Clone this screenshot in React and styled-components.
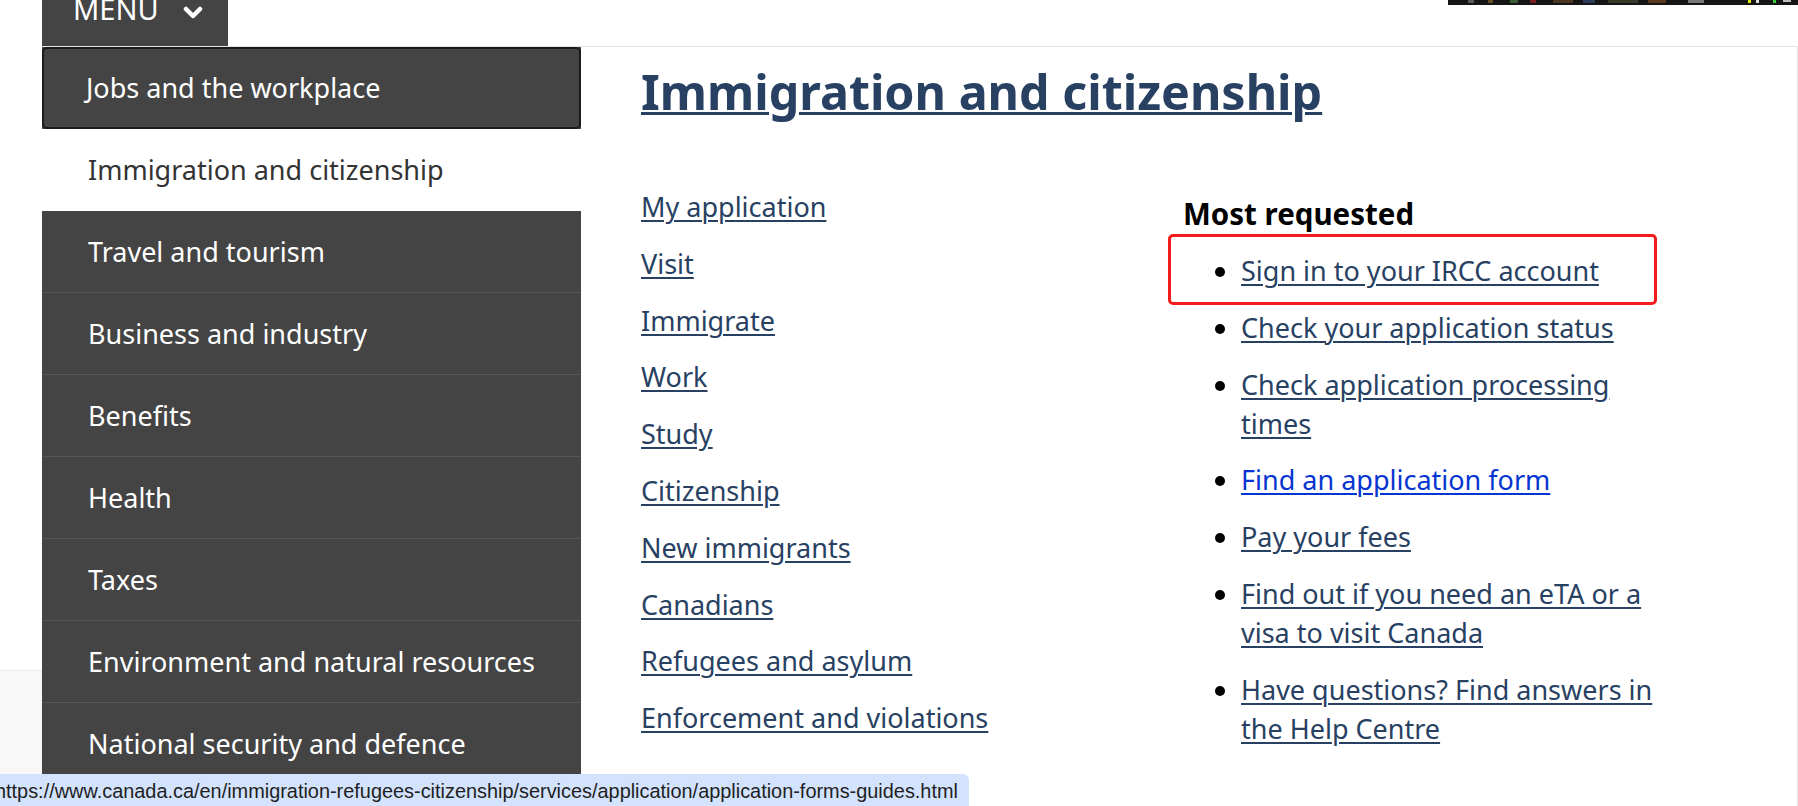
import React from 'react';
import styled, { createGlobalStyle, css } from 'styled-components';

const GlobalStyle = createGlobalStyle`
  html, body {
    margin: 0;
    padding: 0;
    height: 806px;
    overflow: hidden;
    background: #fff;
  }
  body {
    font-family: "Noto Sans", "DejaVu Sans", sans-serif;
  }
`;

const Page = styled.div`
  display: flex;
  flex-direction: column;
  height: 806px;
`;

const Header = styled.header`
  display: flex;
  align-items: flex-start;
  height: 46px;
  padding-left: 42px;
`;

const MenuButton = styled.button`
  display: flex;
  align-items: flex-start;
  width: 186px;
  height: 46px;
  padding: 0 0 0 31px;
  border: 0;
  background: #444;
  color: #fff;
  font-family: "Noto Sans", sans-serif;
  font-size: 29px;
  line-height: 29px;
  overflow: hidden;
  cursor: pointer;
`;

const MenuLabel = styled.span`
  margin-top: -6px;
`;

const Chevron = styled.svg`
  margin: 6px 0 0 24px;
`;

const Thumb = styled.svg`
  margin-left: auto;
  display: block;
`;

const Body = styled.div`
  display: flex;
  flex: 1;
  min-height: 0;
`;

const Gutter = styled.div`
  width: 42px;
  flex-shrink: 0;
  background: linear-gradient(#fff 0 624px, #ececec 624px 625px, #f8f8f8 625px);
`;

const Panel = styled.div`
  flex: 1;
  display: flex;
  border-top: 1px solid #e4e4e4;
  border-right: 1px solid #e4e4e4;
  background: #fff;
  min-height: 0;
`;

const MenuList = styled.ul`
  list-style: none;
  margin: 0;
  padding: 0;
  width: 539px;
  flex-shrink: 0;
  background: #444;
  overflow: hidden;
`;

const MenuItem = styled.li`
  box-sizing: border-box;
  height: 82px;
  display: flex;
  align-items: center;
  padding-left: 46px;
  font-size: 27px;
  color: ${p => (p.$current ? '#333' : '#fff')};
  background: ${p => (p.$current ? '#fff' : '#444')};
  border-bottom: 1px solid ${p => (p.$current ? '#fff' : '#555')};

  ${p => p.$focused && css`
    border: 2px solid #1b1b1b;
    border-radius: 5px;
    padding: 0 0 2px 42px;
  `}
`;

const Content = styled.div`
  flex: 1;
  padding: 15px 0 0 60px;
`;

const Title = styled.h1`
  margin: 0 0 67px;
  font-size: 48.4px;
  line-height: 58px;
  font-weight: 700;

  a {
    color: #284162;
    text-decoration-thickness: 3px;
  }
`;

const Columns = styled.div`
  display: grid;
  grid-template-columns: 542px 485px;
  align-items: start;
`;

const LinkList = styled.ul`
  list-style: none;
  margin: 0;
  padding: 0;
`;

const Item = styled.li`
  position: relative;
  margin-bottom: 17.8px;
  font-size: 27px;
  line-height: 39px;
  color: #000;
`;

const Link = styled.a`
  color: ${p => (p.$hover ? '#0535d2' : '#284162')};
  text-decoration: underline;
  text-decoration-thickness: 1.5px;
  text-underline-offset: 3px;
`;

const SideHeading = styled.h2`
  margin: 9px 0 0;
  font-size: 29.5px;
  line-height: 36px;
  font-weight: 700;
  color: #000;
`;

const BulletList = styled.ul`
  margin: 19px 0 0;
  padding-left: 58px;
  list-style: disc;
`;

const Highlight = styled.span`
  position: absolute;
  left: -73px;
  top: -17px;
  width: 489px;
  height: 71px;
  box-sizing: border-box;
  border: 3px solid #f41c1c;
  border-radius: 5px;
  pointer-events: none;
`;

const StatusBubble = styled.div`
  position: fixed;
  left: 0;
  bottom: 0;
  width: 969px;
  height: 32px;
  box-sizing: border-box;
  display: flex;
  align-items: center;
  background: #d3e3fd;
  border-top-right-radius: 6px;
  font-family: "Liberation Sans", Arial, sans-serif;
  font-size: 19.9px;
  color: #1f1f1f;
  white-space: nowrap;
  overflow: hidden;
`;

const StatusText = styled.span`
  margin: 2px 0 0 -5px;
`;

const menuItems = [
  'Jobs and the workplace',
  'Immigration and citizenship',
  'Travel and tourism',
  'Business and industry',
  'Benefits',
  'Health',
  'Taxes',
  'Environment and natural resources',
  'National security and defence',
  'Culture, history and sport',
];

const topics = [
  'My application',
  'Visit',
  'Immigrate',
  'Work',
  'Study',
  'Citizenship',
  'New immigrants',
  'Canadians',
  'Refugees and asylum',
  'Enforcement and violations',
];

const requested = [
  { text: 'Sign in to your IRCC account', boxed: true },
  { text: 'Check your application status' },
  { text: 'Check application processing times' },
  { text: 'Find an application form', hover: true },
  { text: 'Pay your fees' },
  { text: 'Find out if you need an eTA or a visa to visit Canada' },
  { text: 'Have questions? Find answers in the Help Centre' },
];

const App = () => {
  return (
    <>
      <GlobalStyle />
      <Page>
        <Header>
          <MenuButton>
            <MenuLabel>MENU</MenuLabel>
            <Chevron width="20" height="13" viewBox="0 0 20 13">
              <polyline points="3,3 10,10 17,3" fill="none" stroke="#fff" strokeWidth="4.5" strokeLinecap="round" strokeLinejoin="round" />
            </Chevron>
          </MenuButton>
          <Thumb width="350" height="5" viewBox="0 0 350 5">
            <rect width="350" height="5" fill="#151515" />
            <rect x="20" y="0" width="6" height="3" fill="#5a5a5a" />
            <rect x="40" y="0" width="5" height="3" fill="#6b4a2a" />
            <rect x="62" y="0" width="8" height="3" fill="#3b5c3b" />
            <rect x="82" y="0" width="6" height="3" fill="#7a2020" />
            <rect x="105" y="0" width="20" height="3" fill="#4a3520" />
            <rect x="135" y="0" width="12" height="3" fill="#2a3a5a" />
            <rect x="160" y="0" width="30" height="3" fill="#3a3a2a" />
            <rect x="200" y="0" width="18" height="3" fill="#5a3a1a" />
            <rect x="240" y="0" width="16" height="3" fill="#777" />
            <rect x="300" y="0" width="3" height="3" fill="#e6e600" />
            <rect x="308" y="0" width="3" height="3" fill="#ddd" />
            <rect x="325" y="0" width="3" height="3" fill="#3c3" />
            <rect x="335" y="0" width="8" height="2" fill="#bbb" />
          </Thumb>
        </Header>
        <Body>
          <Gutter />
          <Panel>
            <MenuList>
              {menuItems.map((label, i) => (
                <MenuItem key={label} $focused={i === 0} $current={i === 1}>
                  {label}
                </MenuItem>
              ))}
            </MenuList>
            <Content>
              <Title>
                <a href="#immigration">Immigration and citizenship</a>
              </Title>
              <Columns>
                <LinkList>
                  {topics.map(t => (
                    <Item key={t}>
                      <Link href="#topic">{t}</Link>
                    </Item>
                  ))}
                </LinkList>
                <div>
                  <SideHeading>Most requested</SideHeading>
                  <BulletList>
                    {requested.map(r => (
                      <Item key={r.text}>
                        {r.boxed && <Highlight />}
                        <Link href="#req" $hover={r.hover}>{r.text}</Link>
                      </Item>
                    ))}
                  </BulletList>
                </div>
              </Columns>
            </Content>
          </Panel>
        </Body>
      </Page>
      <StatusBubble>
        <StatusText>https://www.canada.ca/en/immigration-refugees-citizenship/services/application/application-forms-guides.html</StatusText>
      </StatusBubble>
    </>
  );
};

export default App;
